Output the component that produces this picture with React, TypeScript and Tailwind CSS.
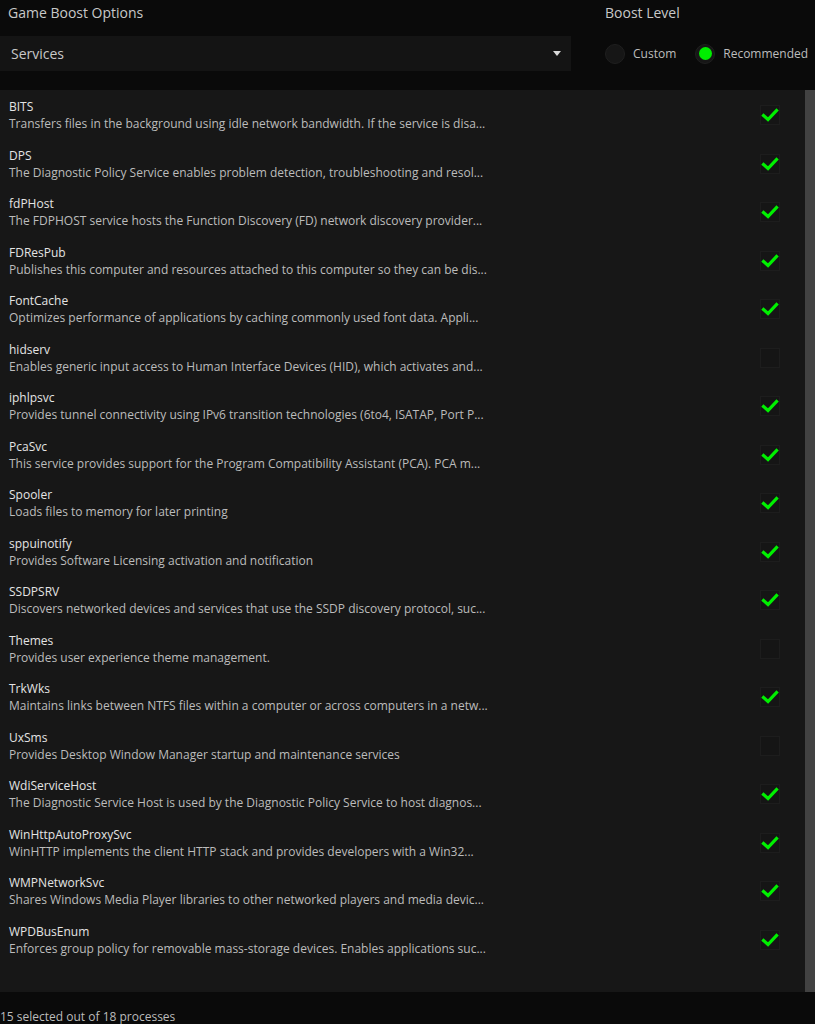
const services = [
  { name: "BITS", desc: "Transfers files in the background using idle network bandwidth. If the service is disa...", on: true },
  { name: "DPS", desc: "The Diagnostic Policy Service enables problem detection, troubleshooting and resol...", on: true },
  { name: "fdPHost", desc: "The FDPHOST service hosts the Function Discovery (FD) network discovery provider...", on: true },
  { name: "FDResPub", desc: "Publishes this computer and resources attached to this computer so they can be dis...", on: true },
  { name: "FontCache", desc: "Optimizes performance of applications by caching commonly used font data. Appli...", on: true },
  { name: "hidserv", desc: "Enables generic input access to Human Interface Devices (HID), which activates and...", on: false },
  { name: "iphlpsvc", desc: "Provides tunnel connectivity using IPv6 transition technologies (6to4, ISATAP, Port P...", on: true },
  { name: "PcaSvc", desc: "This service provides support for the Program Compatibility Assistant (PCA).  PCA m...", on: true },
  { name: "Spooler", desc: "Loads files to memory for later printing", on: true },
  { name: "sppuinotify", desc: "Provides Software Licensing activation and notification", on: true },
  { name: "SSDPSRV", desc: "Discovers networked devices and services that use the SSDP discovery protocol, suc...", on: true },
  { name: "Themes", desc: "Provides user experience theme management.", on: false },
  { name: "TrkWks", desc: "Maintains links between NTFS files within a computer or across computers in a netw...", on: true },
  { name: "UxSms", desc: "Provides Desktop Window Manager startup and maintenance services", on: false },
  { name: "WdiServiceHost", desc: "The Diagnostic Service Host is used by the Diagnostic Policy Service to host diagnos...", on: true },
  { name: "WinHttpAutoProxySvc", desc: "WinHTTP implements the client HTTP stack and provides developers with a Win32...", on: true },
  { name: "WMPNetworkSvc", desc: "Shares Windows Media Player libraries to other networked players and media devic...", on: true },
  { name: "WPDBusEnum", desc: "Enforces group policy for removable mass-storage devices. Enables applications suc...", on: true },
];

function Check({ on }: { on: boolean }) {
  return (
    <div className="w-5 h-5 border border-[#1d1d1d] bg-[#151515] flex items-center justify-center">
      {on && (
        <svg width="18" height="16" viewBox="0 0 18 16">
          <path d="M2.5 8.5 L7 12.5 L15.5 3.5" fill="none" stroke="#00f000" strokeWidth="3.2" strokeLinecap="square" />
        </svg>
      )}
    </div>
  );
}

function Radio({ label, on }: { label: string; on: boolean }) {
  return (
    <div className="flex items-center gap-[8px]">
      <div className="w-5 h-5 rounded-full bg-[#161616] border border-[#1f1f1f] flex items-center justify-center">
        {on && <div className="w-[13px] h-[13px] rounded-full bg-[#00ee00]" />}
      </div>
      <span className="text-[12px] text-[#bdbdbd] whitespace-nowrap">{label}</span>
    </div>
  );
}

export default function App() {
  return (
    <div
      className="w-[815px] h-[1024px] overflow-hidden bg-[#0a0a0a] flex flex-col"
      style={{ fontFamily: '"Open Sans", "Noto Sans", sans-serif' }}
    >
      {/* header */}
      <div className="flex h-[90px] shrink-0">
        <div className="w-[571px] shrink-0 flex flex-col">
          <div className="h-[36px] px-2 pt-[2px] text-[14px] text-[#c8c8c8]">Game Boost Options</div>
          <div className="h-[35px] bg-[#141414] flex items-center justify-between pl-[11px] pr-[10px]">
            <span className="text-[14px] text-[#c8c8c8]">Services</span>
            <svg width="8" height="5" viewBox="0 0 8 5">
              <path d="M0 0 H8 L4 5 Z" fill="#d8d8d8" />
            </svg>
          </div>
        </div>
        <div className="flex-1 flex flex-col pl-[34px]">
          <div className="h-[36px] pt-[2px] text-[14px] text-[#c8c8c8]">Boost Level</div>
          <div className="h-[35px] flex items-center gap-[19px]">
            <Radio label="Custom" on={false} />
            <Radio label="Recommended" on />
          </div>
        </div>
      </div>

      {/* list */}
      <div className="flex h-[902px] shrink-0 bg-[#171717]">
        <div className="flex-1 pt-[1px]">
          {services.map((s) => (
            <div key={s.name} className="h-[48.5px] flex items-center pl-[9px] pr-[25px]">
              <div className="flex-1 leading-[17px]">
                <div className="text-[12px] text-[#e4e4e4]">{s.name}</div>
                <div className="text-[12px] text-[#bcbcbc] whitespace-nowrap">{s.desc}</div>
              </div>
              <Check on={s.on} />
            </div>
          ))}
        </div>
        <div className="w-[10px] bg-[#424242]" />
      </div>

      {/* footer */}
      <div className="flex-1 flex items-end">
        <div className="text-[12px] text-[#bcbcbc] leading-[16px] translate-y-[1px]">15 selected out of 18 processes</div>
      </div>
    </div>
  );
}
